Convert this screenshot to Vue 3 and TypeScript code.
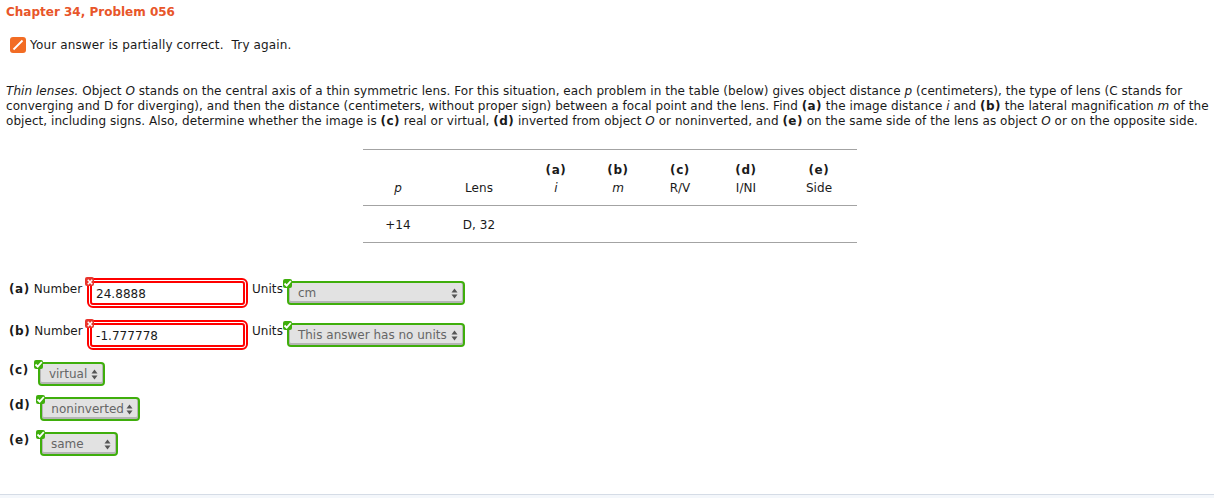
<template>
  <div class="page">
    <h1 class="title">Chapter 34, Problem 056</h1>

    <div class="status">
      <span class="status-icon">
        <svg width="16" height="16" viewBox="0 0 16 16">
          <rect width="16" height="16" rx="3" fill="#f26c24" />
          <path d="M3.5 12.5 L12.5 3.5" stroke="#fff" stroke-width="1.8" />
        </svg>
      </span>
      <span>Your answer is partially correct.&nbsp; Try again.</span>
    </div>

    <p class="question">
      <em>Thin lenses.</em> Object <em>O</em> stands on the central axis of a thin symmetric lens. For this situation, each problem in the table (below) gives object distance <em>p</em> (centimeters), the type of lens (C stands for converging and D for diverging), and then the distance (centimeters, without proper sign) between a focal point and the lens. Find <b>(a)</b> the image distance <em>i</em> and <b>(b)</b> the lateral magnification <em>m</em> of the object, including signs. Also, determine whether the image is <b>(c)</b> real or virtual, <b>(d)</b> inverted from object <em>O</em> or noninverted, and <b>(e)</b> on the same side of the lens as object <em>O</em> or on the opposite side.
    </p>

    <table class="lens-table">
      <thead>
        <tr>
          <th v-for="col in columns" :key="col.name" :style="{ width: col.width + 'px' }">
            <b v-if="col.part">{{ col.part }}</b>
            <br v-if="col.part" />
            <em v-if="col.italic">{{ col.name }}</em>
            <template v-else>{{ col.name }}</template>
          </th>
        </tr>
      </thead>
      <tbody>
        <tr>
          <td>+14</td>
          <td>D, 32</td>
          <td></td>
          <td></td>
          <td></td>
          <td></td>
          <td></td>
        </tr>
      </tbody>
    </table>

    <div class="answers">
      <div v-for="row in numberRows" :key="row.part" class="answer-row">
        <span class="label number-label"><b>{{ row.part }}</b> Number</span>
        <div class="field wrong">
          <span class="badge bad">
            <svg width="8" height="8" viewBox="0 0 9 9">
              <path d="M2 2 L7 7 M7 2 L2 7" stroke="#fff" stroke-width="1.8" />
            </svg>
          </span>
          <div class="num-input">{{ row.value }}</div>
        </div>
        <span class="label units">Units</span>
        <div class="field right">
          <span class="badge good">
            <svg width="9" height="9" viewBox="0 0 9 9">
              <path d="M1.5 4.5 L3.7 6.7 L7.8 2" stroke="#fff" stroke-width="1.8" fill="none" />
            </svg>
          </span>
          <div class="select units-select">
            <span>{{ row.units }}</span>
            <svg class="arrows" width="7" height="11" viewBox="0 0 7 11">
              <path d="M3.5 0.5 L6.5 4.5 H0.5 Z M3.5 10.5 L6.5 6.5 H0.5 Z" fill="#555" />
            </svg>
          </div>
        </div>
      </div>

      <div v-for="row in choiceRows" :key="row.part" class="choice-row">
        <span class="label"><b>{{ row.part }}</b></span>
        <div class="field right" :style="{ marginLeft: row.gap + 'px' }">
          <span class="badge good">
            <svg width="9" height="9" viewBox="0 0 9 9">
              <path d="M1.5 4.5 L3.7 6.7 L7.8 2" stroke="#fff" stroke-width="1.8" fill="none" />
            </svg>
          </span>
          <div class="select" :style="{ width: row.width + 'px' }">
            <span>{{ row.value }}</span>
            <svg class="arrows" width="7" height="11" viewBox="0 0 7 11">
              <path d="M3.5 0.5 L6.5 4.5 H0.5 Z M3.5 10.5 L6.5 6.5 H0.5 Z" fill="#555" />
            </svg>
          </div>
        </div>
      </div>
    </div>

    <div class="footer-line"></div>
  </div>
</template>

<script setup lang="ts">
interface Column {
  name: string;
  part?: string;
  italic?: boolean;
  width: number;
}

const columns: Column[] = [
  { name: 'p', italic: true, width: 70 },
  { name: 'Lens', width: 92 },
  { name: 'i', part: '(a)', italic: true, width: 62 },
  { name: 'm', part: '(b)', italic: true, width: 62 },
  { name: 'R/V', part: '(c)', width: 62 },
  { name: 'I/NI', part: '(d)', width: 70 },
  { name: 'Side', part: '(e)', width: 76 },
];

const numberRows = [
  { part: '(a)', value: '24.8888', units: 'cm' },
  { part: '(b)', value: '-1.777778', units: 'This answer has no units' },
];

const choiceRows = [
  { part: '(c)', value: 'virtual', width: 67, gap: 9 },
  { part: '(d)', value: 'noninverted', width: 100, gap: 10 },
  { part: '(e)', value: 'same', width: 78, gap: 10 },
];
</script>

<style>
html,
body {
  margin: 0;
  background: #fff;
}
</style>

<style scoped>
.page {
  height: 498px;
  box-sizing: border-box;
  padding: 5px 0 0 6px;
  font-family: "DejaVu Sans", Verdana, sans-serif;
  font-size: 12px;
  line-height: 14px;
  letter-spacing: 0.05px;
  color: #1a1a1a;
  position: relative;
  overflow: hidden;
}

.page b {
  letter-spacing: 0.6px;
}

.page .question b {
  letter-spacing: 0.4px;
}

.title {
  margin: 0;
  font-size: 12px;
  line-height: 14px;
  font-weight: bold;
  letter-spacing: 0;
  color: #e8562a;
}

.status {
  display: flex;
  align-items: center;
  gap: 4px;
  margin: 17px 0 0 4px;
  height: 18px;
  letter-spacing: 0.15px;
}

.status-icon {
  display: flex;
}

.question {
  margin: 30px 0 0;
  width: 1208px;
  line-height: 15px;
}

.lens-table {
  margin: 20px auto 0;
  border-collapse: collapse;
  border-top: 1px solid #a3a3a3;
  border-bottom: 1px solid #a3a3a3;
  table-layout: fixed;
  width: 494px;
}

.lens-table th {
  font-weight: normal;
  text-align: center;
  vertical-align: bottom;
  padding: 11px 0 8px;
  line-height: 18px;
  border-bottom: 1px solid #a3a3a3;
}

.lens-table td {
  text-align: center;
  padding: 12px 0 10px;
}

.answers {
  margin-top: 35px;
  padding-left: 3px;
}

.answer-row {
  display: flex;
  align-items: flex-start;
  height: 42px;
}

.choice-row {
  display: flex;
  align-items: flex-start;
  height: 35px;
}

.label {
  padding-top: 4px;
  white-space: nowrap;
}

.number-label {
  width: 74px;
}

.choice-row .label {
  padding-top: 1px;
}

.units {
  margin-left: 4px;
}

.field {
  position: relative;
  margin-left: 4px;
}

.answer-row .field.right {
  margin-left: 4px;
  margin-top: 3px;
}

.wrong .num-input {
  box-sizing: content-box;
  width: 147px;
  height: 20px;
  line-height: 22px;
  padding-left: 4px;
  border: 2px solid #f00;
  outline: 2px solid #f00;
  outline-offset: 1px;
  border-radius: 3px;
  background: #fff;
  margin: 3px;
}

.select {
  display: flex;
  align-items: center;
  justify-content: space-between;
  box-sizing: border-box;
  height: 24px;
  padding: 0 5px 0 9px;
  border: 2px solid #3fae0c;
  border-radius: 4px;
  background: #e2e2e2;
  box-shadow: inset 0 -1px 0 1px #b5b5b5;
  color: #666;
  letter-spacing: 0;
  white-space: nowrap;
}

.units-select {
  width: 178px;
}

.arrows {
  flex: none;
}

.badge {
  position: absolute;
  left: -4px;
  top: -2px;
  width: 9px;
  height: 9px;
  display: flex;
  align-items: center;
  justify-content: center;
  border-radius: 2px;
  z-index: 1;
}

.bad {
  background: #e8342c;
  left: -2px;
  top: -1px;
}

.good {
  background: #3fae0c;
}

.footer-line {
  position: absolute;
  left: 0;
  right: 0;
  bottom: 0;
  height: 3px;
  border-top: 1px solid #d5dce6;
  background: #f4f7fb;
}
</style>
